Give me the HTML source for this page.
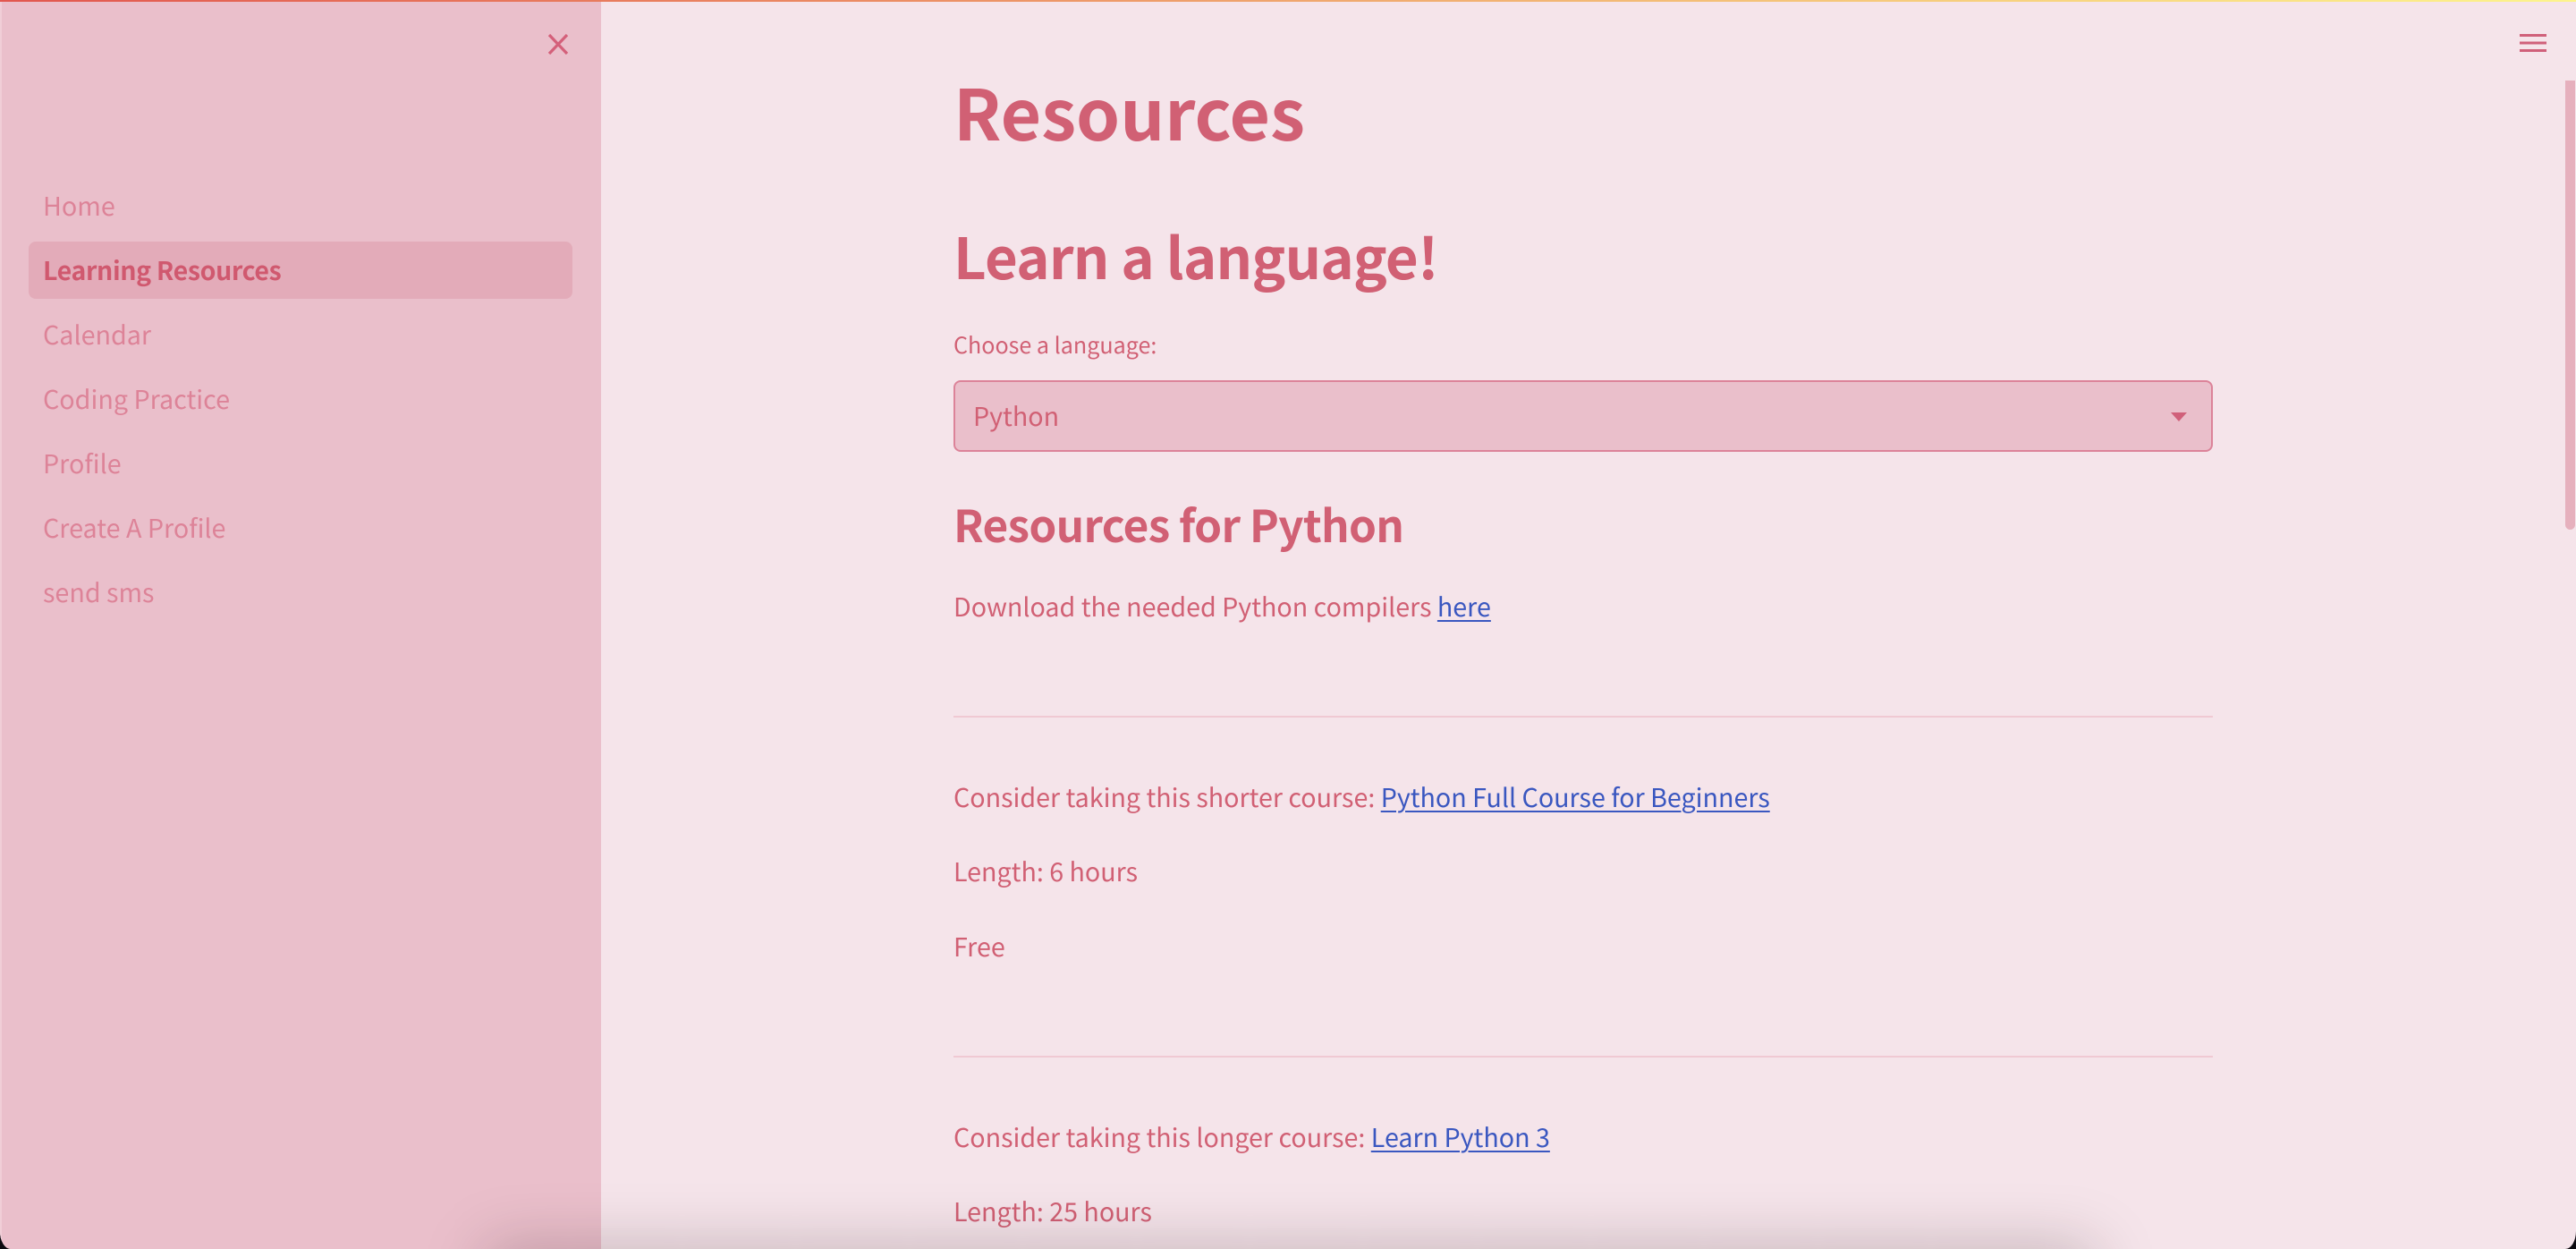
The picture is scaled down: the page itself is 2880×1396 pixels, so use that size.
<!DOCTYPE html>
<html lang="en"><head><meta charset="utf-8"><title>Resources</title>
<style>
html,body{margin:0;padding:0;width:2880px;height:1396px;overflow:hidden;background:#0c0a10}
#app{position:absolute;left:0;top:0;width:2880px;height:1396px;overflow:hidden;background:#f5e4ea;border-radius:0 0 12px 12px/0 0 20px 20px;font-family:"Noto Sans CJK JP","Liberation Sans",sans-serif;color:#d16074}
#app *{box-sizing:border-box}
.t{position:absolute;margin:0;white-space:nowrap;line-height:1;font-weight:400}
aside{position:absolute;left:0;top:0;width:672px;height:1396px;background:#eabfcb}
aside::before{content:"";position:absolute;left:0;top:0;width:2px;height:100%;background:#f0ced7}
#bar{position:absolute;left:0;top:0;width:2880px;height:2px;background:linear-gradient(90deg,#e2574f,#fdf48c);z-index:5}
#active{position:absolute;left:32px;top:270px;width:608px;height:64px;border-radius:8px;background:#e3abb9}
aside .t{font-size:28.7px;color:#dd8398;left:48px}
aside .t.on{color:#d0596f;font-weight:700;font-size:28.5px;letter-spacing:-.36px}
h1.t{font-size:78.5px;font-weight:700}
h2.t{font-size:63.5px;font-weight:700;letter-spacing:-.8px}
h3.t{font-size:49.5px;font-weight:700;letter-spacing:-.7px}
p.t{font-size:28.65px}
a{color:#3a57c0;text-decoration:underline;text-decoration-thickness:2px;text-underline-offset:4px}
hr{position:absolute;left:1066px;width:1408px;height:2px;margin:0;border:0;background:#f0c9d3}
#sel{position:absolute;left:1066px;top:425px;width:1408px;height:80px;background:#eabfcb;border:2px solid #dc8399;border-radius:8px}
#thumb{position:absolute;left:2868px;top:90px;width:11px;height:502px;background:#e6b0bd;border-radius:0 0 6px 6px}
#shadow{position:absolute;left:545px;top:1396px;width:1795px;height:60px;box-shadow:0 0 70px 0 rgba(40,20,25,.26);z-index:4}
svg{position:absolute;overflow:visible}
</style></head><body>
<div id="app">
<div id="bar"></div>
<aside>
<svg style="left:0;top:0" width="672" height="100"><path d="M614 39L634 60M634 39L614 60" stroke="#d4607a" stroke-width="3.2" fill="none"/></svg>
<div id="active"></div>
<div class="t" style="top:216px">Home</div>
<div class="t on" style="top:288px">Learning Resources</div>
<div class="t" style="top:360px">Calendar</div>
<div class="t" style="top:432px">Coding Practice</div>
<div class="t" style="top:504px">Profile</div>
<div class="t" style="top:576px">Create A Profile</div>
<div class="t" style="top:648px">send sms</div>
</aside>
<main>
<svg style="left:2800px;top:30px" width="60" height="40"><path d="M17 8H47V11H17zM17 16.5H47V19.5H17zM17 25H47V28H17z" fill="#d0607a"/></svg>
<div id="thumb"></div>
<h1 class="t" style="left:1066px;top:84px">Resources</h1>
<h2 class="t" style="left:1066px;top:254px">Learn a language!</h2>
<label class="t" style="left:1066px;top:373px;font-size:25.1px">Choose a language:</label>
<div id="sel"></div>
<div class="t" style="left:1088px;top:451px;font-size:28.65px">Python</div>
<svg style="left:2420px;top:455px" width="32" height="24"><path d="M7 6H25L16 16z" fill="#d0607a"/></svg>
<h3 class="t" style="left:1066px;top:561px">Resources for Python</h3>
<p class="t" style="left:1066px;top:664px">Download the needed Python compilers <a href="#">here</a></p>
<hr style="top:800px">
<p class="t" style="left:1066px;top:877px">Consider taking this shorter course: <a href="#">Python Full Course for Beginners</a></p>
<p class="t" style="left:1066px;top:960px">Length: 6 hours</p>
<p class="t" style="left:1066px;top:1044px">Free</p>
<hr style="top:1180px">
<p class="t" style="left:1066px;top:1257px">Consider taking this longer course: <a href="#">Learn Python 3</a></p>
<p class="t" style="left:1066px;top:1340px">Length: 25 hours</p>
</main>
<div id="shadow"></div>
</div>
</body></html>
